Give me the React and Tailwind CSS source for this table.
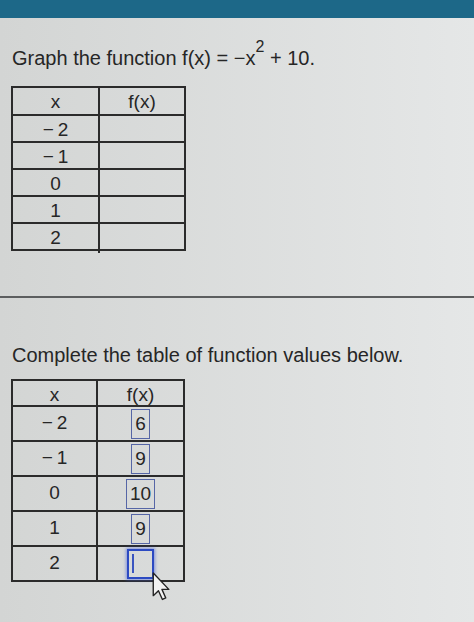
import React from "react";

const font = { fontFamily: '"Liberation Sans", Arial, sans-serif' };

function EmptyTable() {
  const xs = ["−\u20092", "−\u20091", "0", "1", "2"];
  return (
    <div className="w-[175px] border-2 border-[#2b2b2b] text-[19px] text-[#262626]">
      <div className="grid grid-cols-[87px_1fr] h-[26px]">
        <div className="flex items-center justify-center border-r-2 border-[#2b2b2b]">x</div>
        <div className="flex items-center justify-center">f(x)</div>
      </div>
      {xs.map((x) => (
        <div key={x} className="grid grid-cols-[87px_1fr] h-[27px] border-t-2 border-[#2b2b2b]">
          <div className="flex items-center justify-center border-r-2 border-[#2b2b2b]">{x}</div>
          <div></div>
        </div>
      ))}
    </div>
  );
}

function AnswerBox({ value }) {
  return (
    <div className="flex h-[30px] items-center justify-center border-[1.5px] border-[#5666a6] px-[3px] leading-none">
      {value}
    </div>
  );
}

function FilledTable() {
  const rows = [
    ["−\u20092", "6"],
    ["−\u20091", "9"],
    ["0", "10"],
    ["1", "9"],
    ["2", null],
  ];
  return (
    <div className="relative w-[174px] border-2 border-[#2b2b2b] text-[19px] text-[#262626]">
      <div className="grid grid-cols-[85px_1fr] h-[24px]">
        <div className="flex items-center justify-center border-r-2 border-[#2b2b2b]">x</div>
        <div className="flex items-center justify-center">f(x)</div>
      </div>
      {rows.map(([x, fx], i) => (
        <div key={i} className="grid grid-cols-[85px_1fr] h-[35px] border-t-2 border-[#2b2b2b]">
          <div className="flex items-center justify-center border-r-2 border-[#2b2b2b]">{x}</div>
          <div className="flex items-center justify-center">
            {fx !== null ? (
              <AnswerBox value={fx} />
            ) : (
              <div className="flex h-[30px] w-[27px] items-center border-2 border-[#2c4ac2] pl-[3px] shadow-[0_0_3px_1px_rgba(60,90,220,0.55)]">
                <div className="h-[19px] w-[2px] bg-[#3a55c0]"></div>
              </div>
            )}
          </div>
        </div>
      ))}
      <svg
        className="absolute left-[139px] top-[191px]"
        width="19"
        height="29"
        viewBox="0 0 12 19"
      >
        <path
          d="M0.6 0.6 L0.6 15.5 L4 12.3 L6.6 18 L8.8 17 L6.3 11.4 L10.8 11.4 Z"
          fill="#f2f2f2"
          stroke="#222"
          strokeWidth="0.9"
          strokeLinejoin="round"
        />
      </svg>
    </div>
  );
}

export default function App() {
  return (
    <div
      className="h-[622px] w-full overflow-hidden bg-linear-to-r from-[#d3d5d4] to-[#e5e7e7]"
      style={font}
    >
      <div className="h-[18px] bg-[#1d6888]"></div>

      <div className="px-[11px]">
        <div className="mt-[28px] h-[24px] pl-[1px] text-[20px] leading-[24px] text-[#262626]">
          Graph the function f(x) = −x
          <span className="text-[16px] leading-[0] align-[13px]">2</span>
          {" "}+ 10.
        </div>

        <div className="mt-[16px]">
          <EmptyTable />
        </div>
      </div>

      <div className="mt-[45px] h-[2px] bg-[#5c5e5f]"></div>

      <div className="px-[11px]">
        <div className="mt-[45px] h-[24px] pl-[1px] text-[20px] leading-[24px] text-[#262626]">
          Complete the table of function values below.
        </div>

        <div className="mt-[12px]">
          <FilledTable />
        </div>
      </div>
    </div>
  );
}
